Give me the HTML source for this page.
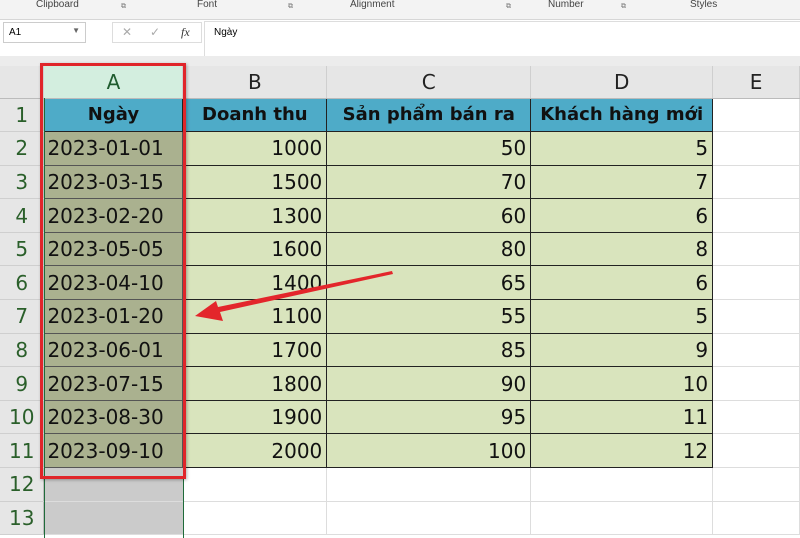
<!DOCTYPE html>
<html><head><meta charset="utf-8"><style>
*{margin:0;padding:0;box-sizing:border-box}
body{width:800px;height:533px;overflow:hidden;background:#fff;font-family:"Liberation Sans","DejaVu Sans",sans-serif;position:relative}
.abs{position:absolute}
.rib{left:0;top:0;width:800px;height:20px;background:#f3f3f3;border-bottom:1px solid #d6d6d6;font-size:10px;color:#444}
.rib span{position:absolute;top:-1px}
.fb{left:0;top:20px;width:800px;height:38px;background:#fff}
.gap{left:0;top:56px;width:800px;height:10px;background:#ececec}
table{position:absolute;left:0;top:66px;border-collapse:collapse;font-family:"DejaVu Sans",sans-serif}
td{padding:0 4px;font-size:20px;color:#111;white-space:nowrap;height:33.6px}
.ch{background:#e6e6e6;border-right:1px solid #cfcfcf;border-bottom:1px solid #bbb;text-align:center;font-size:20px;color:#222;height:32px}
.rh{background:#e6e6e6;color:#2a5f2a;text-align:center;border-bottom:1px solid #cfcfcf;border-right:1px solid #bbb;font-size:20px}
.h{background:#4eabc8;font-weight:bold;text-align:center;border:1px solid #222;font-size:18px}
.d{background:#d9e4bd;text-align:right;border:1px solid #222}
.a{background:#aab18f;text-align:left;border:1px solid #555;padding-left:3px}
.e{border-right:1px solid #ddd;border-bottom:1px solid #ddd}
.g{background:#cbcbcb;border-bottom:1px solid #ddd}
</style></head><body>
<div class="abs rib">
<span style="left:36px">Clipboard</span><span style="left:197px">Font</span><span style="left:350px">Alignment</span><span style="left:548px">Number</span><span style="left:690px">Styles</span>
<span style="left:121px;top:3px;font-size:7px;color:#777">⧉</span><span style="left:288px;top:3px;font-size:7px;color:#777">⧉</span><span style="left:506px;top:3px;font-size:7px;color:#777">⧉</span><span style="left:621px;top:3px;font-size:7px;color:#777">⧉</span>
</div>
<div class="abs fb">
<div class="abs" style="left:3px;top:2px;width:83px;height:21px;border:1px solid #ccc;font-size:10px;padding:4px 5px">A1<span style="position:absolute;right:5px;top:3px;font-size:8px;color:#666">▼</span></div>
<div class="abs" style="left:112px;top:2px;width:90px;height:21px;border:1px solid #ddd;font-size:12px;color:#aaa"><span style="position:absolute;left:9px;top:2px">✕</span><span style="position:absolute;left:37px;top:2px">✓</span><span style="position:absolute;left:68px;top:2px;color:#333;font-style:italic;font-family:'Liberation Serif'">fx</span></div>
<div class="abs" style="left:204px;top:1px;width:600px;height:36px;border:1px solid #ddd;border-right:none;font-size:10px;padding:5px 9px">Ngày</div>
</div>
<div class="abs gap"></div>
<table>
<colgroup><col style="width:44px"><col style="width:139px"><col style="width:144px"><col style="width:204px"><col style="width:182px"><col style="width:87px"></colgroup>
<tr><td class="ch" style="background:#e6e6e6"></td><td class="ch" style="background:#d3eedf;color:#1f5c2f">A</td><td class="ch">B</td><td class="ch">C</td><td class="ch">D</td><td class="ch">E</td></tr>
<tr><td class="rh">1</td><td class="h">Ngày</td><td class="h">Doanh thu</td><td class="h">Sản phẩm bán ra</td><td class="h">Khách hàng mới</td><td class="e"></td></tr>
<tr><td class="rh">2</td><td class="a">2023-01-01</td><td class="d">1000</td><td class="d">50</td><td class="d">5</td><td class="e"></td></tr>
<tr><td class="rh">3</td><td class="a">2023-03-15</td><td class="d">1500</td><td class="d">70</td><td class="d">7</td><td class="e"></td></tr>
<tr><td class="rh">4</td><td class="a">2023-02-20</td><td class="d">1300</td><td class="d">60</td><td class="d">6</td><td class="e"></td></tr>
<tr><td class="rh">5</td><td class="a">2023-05-05</td><td class="d">1600</td><td class="d">80</td><td class="d">8</td><td class="e"></td></tr>
<tr><td class="rh">6</td><td class="a">2023-04-10</td><td class="d">1400</td><td class="d">65</td><td class="d">6</td><td class="e"></td></tr>
<tr><td class="rh">7</td><td class="a">2023-01-20</td><td class="d">1100</td><td class="d">55</td><td class="d">5</td><td class="e"></td></tr>
<tr><td class="rh">8</td><td class="a">2023-06-01</td><td class="d">1700</td><td class="d">85</td><td class="d">9</td><td class="e"></td></tr>
<tr><td class="rh">9</td><td class="a">2023-07-15</td><td class="d">1800</td><td class="d">90</td><td class="d">10</td><td class="e"></td></tr>
<tr><td class="rh">10</td><td class="a">2023-08-30</td><td class="d">1900</td><td class="d">95</td><td class="d">11</td><td class="e"></td></tr>
<tr><td class="rh">11</td><td class="a">2023-09-10</td><td class="d">2000</td><td class="d">100</td><td class="d">12</td><td class="e"></td></tr>
<tr><td class="rh">12</td><td class="g"></td><td class="e"></td><td class="e"></td><td class="e"></td><td class="e"></td></tr>
<tr><td class="rh">13</td><td class="g"></td><td class="e"></td><td class="e"></td><td class="e"></td><td class="e"></td></tr>
</table>
<div class="abs" style="left:44px;top:98px;width:140px;height:440px;border-left:1px solid #1f6b3a;border-right:1px solid #1f6b3a"></div>
<div class="abs" style="left:40px;top:63px;width:146px;height:416px;border:3px solid #e0252a;box-shadow:1px 1px 3px rgba(0,0,0,.3)"></div>
<svg class="abs" style="left:0;top:0" width="800" height="533">
<polygon points="392,271 393,274 220,312 223,321 195,316 216,301 218,307" fill="#e3262b"/>
</svg>
</body></html>
